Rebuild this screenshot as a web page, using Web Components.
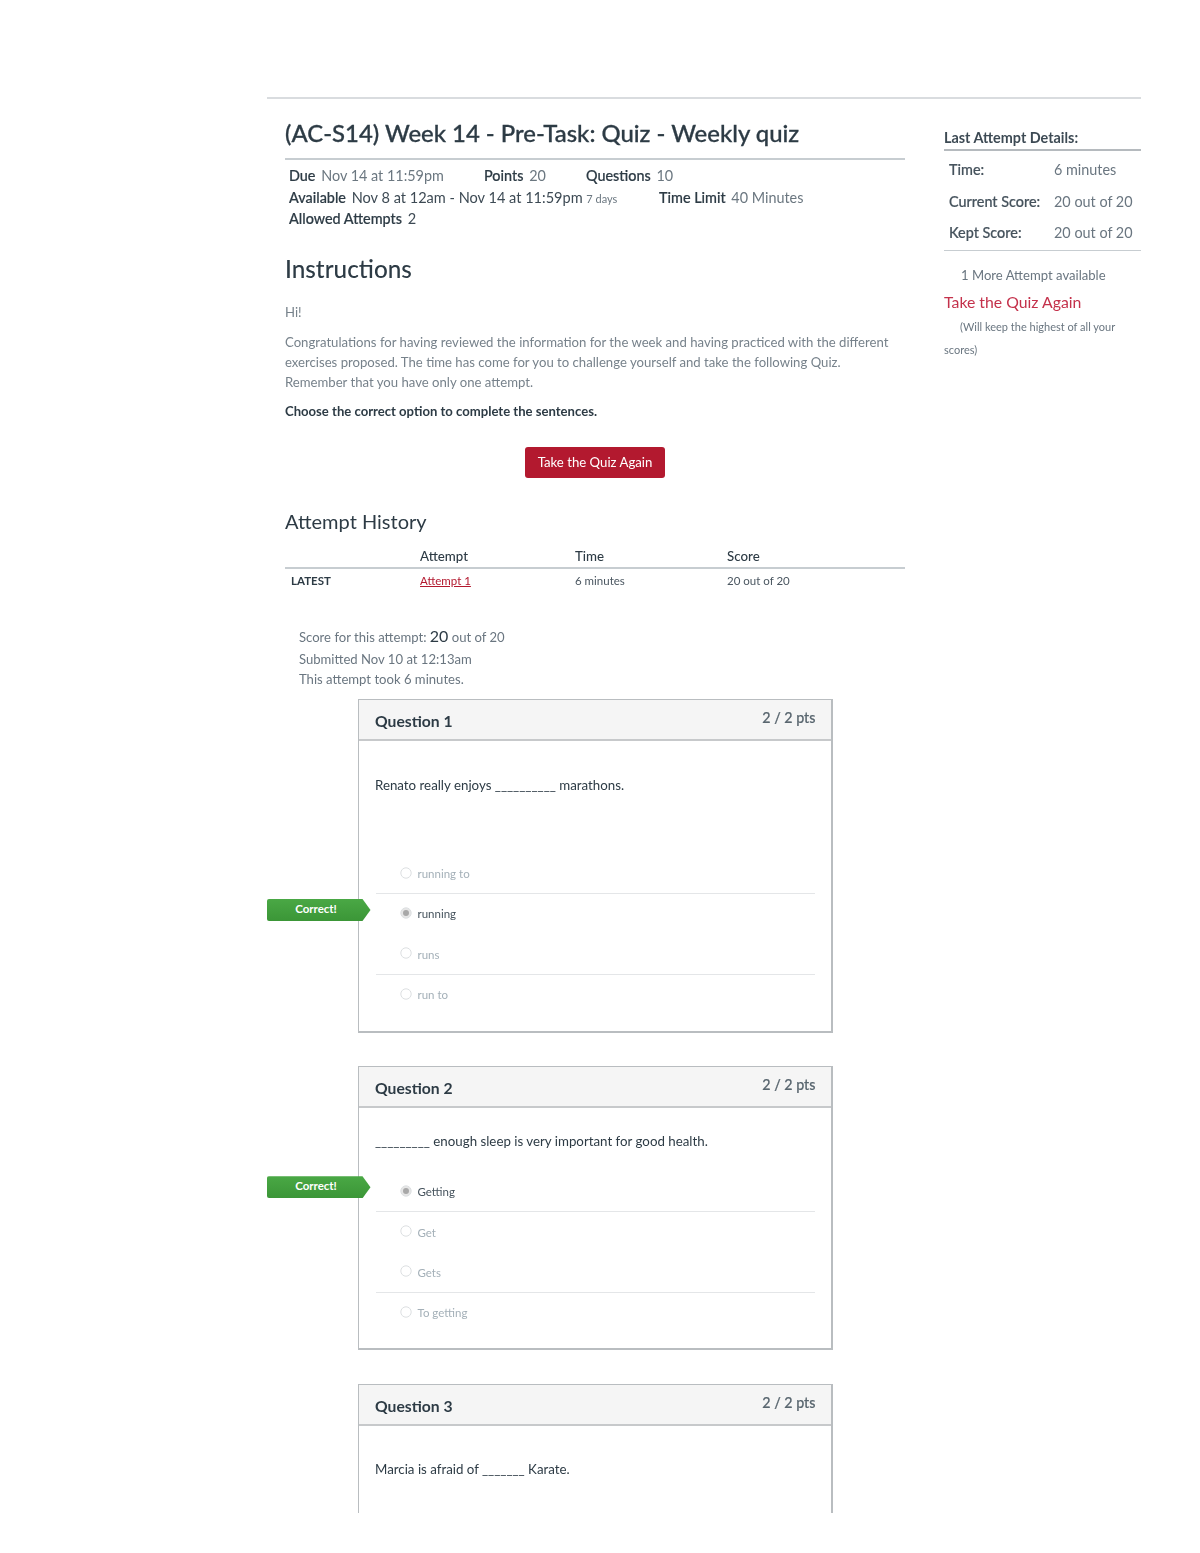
<!DOCTYPE html>
<html>
<head>
<meta charset="utf-8">
<title>Quiz</title>
<style>
  html, body { margin: 0; background: #fff; }
  body { font-family: Lato, "Open Sans", sans-serif; color: #2d3b45; }
</style>
</head>
<body>
<quiz-page>
  <quiz-summary slot="main"></quiz-summary>
  <attempt-history slot="main"></attempt-history>
  <attempt-result slot="main"></attempt-result>

  <quiz-question slot="main" number="1" top="35" gap="60" flag="199" style="margin-bottom:33px">
    Renato really enjoys __________ marathons.
    <quiz-answer slot="answers" line>running to</quiz-answer>
    <quiz-answer slot="answers" picked>running</quiz-answer>
    <quiz-answer slot="answers" line>runs</quiz-answer>
    <quiz-answer slot="answers">run to</quiz-answer>
  </quiz-question>

  <quiz-question slot="main" number="2" top="24" gap="22" bottom="15" flag="109" style="margin-bottom:34px">
    _________ enough sleep is very important for good health.
    <quiz-answer slot="answers" picked line>Getting</quiz-answer>
    <quiz-answer slot="answers">Get</quiz-answer>
    <quiz-answer slot="answers" line>Gets</quiz-answer>
    <quiz-answer slot="answers">To getting</quiz-answer>
  </quiz-question>

  <quiz-question slot="main" number="3" top="34" gap="60">
    Marcia is afraid of _______ Karate.
    <quiz-answer slot="answers" line>&nbsp;</quiz-answer>
  </quiz-question>

  <attempt-details slot="side"></attempt-details>
</quiz-page>

<script>
class QuizPage extends HTMLElement {
  connectedCallback() {
    this.attachShadow({ mode: 'open' });
    this.shadowRoot.innerHTML = `
      <style>
        :host { display: block; height: 1513px; overflow: hidden; padding-top: 97px; box-sizing: border-box; filter: blur(0.45px); }
        .frame { margin: 0 59px 0 267px; border-top: 2px solid #d9dcdf; display: grid; grid-template-columns: 620px 197px; column-gap: 39px; padding: 0 0 0 18px; }
      </style>
      <div class="frame">
        <div><slot name="main"></slot></div>
        <div><slot name="side"></slot></div>
      </div>
    `;
  }
}

class QuizSummary extends HTMLElement {
  connectedCallback() {
    this.attachShadow({ mode: 'open' });
    this.shadowRoot.innerHTML = `
      <style>
        :host { display: block; }
        h1 { margin: 0; padding: 19px 0 11px; font-size: 23.9px; line-height: 29px; font-weight: 500; color: #2d3b45; border-bottom: 2px solid #c7cdd1; -webkit-text-stroke: 0.3px #2d3b45; }
        .meta { padding: 5px 0 0 4px; font-size: 14.4px; line-height: 21px; color: #6b7780; }
        .meta b { font-weight: 500; color: #2d3b45; margin-right: 2px; -webkit-text-stroke: 0.2px #2d3b45; }
        .meta .row { display: flex; height: 21px; }
        .meta .row.first { height: 22px; }
        .meta small { font-size: 11px; }
        .dark { color: #3d4a54; font-size: 14.55px; }
        h2 { margin: 0; padding: 25px 0 0; font-size: 24.3px; line-height: 30px; font-weight: 500; color: #2d3b45; }
        p { margin: 0; font-size: 13.15px; line-height: 20px; color: #77828b; }
        .hi { padding-top: 18px; }
        .body { padding-top: 10px; }
        .strong { padding-top: 9px; color: #2d3b45; font-weight: 700; font-size: 13.1px; }
        .action { display: flex; justify-content: center; padding-top: 26px; }
        .btn { background: #b3192f; color: #fff; font-size: 13.2px; line-height: 31px; height: 31px; padding: 0 12.5px; border-radius: 3px; }
      </style>
      <h1>(AC-S14) Week 14 - Pre-Task: Quiz - Weekly quiz</h1>
      <div class="meta">
        <div class="row first">
          <span style="width:195px"><b>Due</b> Nov 14 at 11:59pm</span>
          <span style="width:102px"><b>Points</b> 20</span>
          <span><b>Questions</b> 10</span>
        </div>
        <div class="row">
          <span style="width:370px"><b>Available</b> <span class="dark">Nov 8 at 12am - Nov 14 at 11:59pm</span> <small>7 days</small></span>
          <span><b>Time Limit</b> 40 Minutes</span>
        </div>
        <div class="row"><span><b>Allowed Attempts</b> <span class="dark">2</span></span></div>
      </div>
      <h2>Instructions</h2>
      <p class="hi">Hi!</p>
      <p class="body">Congratulations for having reviewed the information for the week and having practiced with the different exercises proposed. The time has come for you to challenge yourself and take the following Quiz. Remember that you have only one attempt.</p>
      <p class="strong">Choose the correct option to complete the sentences.</p>
      <div class="action"><span class="btn">Take the Quiz Again</span></div>
    `;
  }
}

class AttemptHistory extends HTMLElement {
  connectedCallback() {
    this.attachShadow({ mode: 'open' });
    this.shadowRoot.innerHTML = `
      <style>
        :host { display: block; }
        h3 { margin: 0; padding: 31px 0 0; font-size: 20px; line-height: 25px; font-weight: 400; color: #2d3b45; }
        .grid { display: grid; grid-template-columns: 135px 155px 152px 1fr; font-size: 11.5px; margin-top: 12px; }
        .head { font-weight: 500; color: #2d3b45; font-size: 13.3px; line-height: 20px; padding-bottom: 1px; border-bottom: 2px solid #c7cdd1; }
        .cell { line-height: 23px; color: #4a5660; }
        .latest { font-weight: 700; padding-left: 6px; color: #2d3b45; }
        a { color: #b3192f; text-decoration: underline; }
      </style>
      <h3>Attempt History</h3>
      <div class="grid">
        <span class="head"></span><span class="head">Attempt</span><span class="head">Time</span><span class="head">Score</span>
        <span class="cell latest">LATEST</span>
        <span class="cell"><a>Attempt 1</a></span>
        <span class="cell">6 minutes</span>
        <span class="cell">20 out of 20</span>
      </div>
    `;
  }
}

class AttemptResult extends HTMLElement {
  connectedCallback() {
    this.attachShadow({ mode: 'open' });
    this.shadowRoot.innerHTML = `
      <style>
        :host { display: block; padding: 34px 0 10px 14px; font-size: 13.1px; line-height: 20px; color: #6a7680; }
        b { font-weight: 400; font-size: 16px; color: #2d3b45; }
        .score { margin-bottom: 2px; }
      </style>
      <div class="score">Score for this attempt: <b>20</b> out of 20</div>
      <div>Submitted Nov 10 at 12:13am</div>
      <div>This attempt took 6 minutes.</div>
    `;
  }
}

class QuizQuestion extends HTMLElement {
  connectedCallback() {
    const top = this.getAttribute('top');
    const gap = this.getAttribute('gap');
    const bottom = this.getAttribute('bottom') || 16;
    const flag = this.getAttribute('flag');
    this.attachShadow({ mode: 'open' });
    this.shadowRoot.innerHTML = `
      <style>
        :host { display: block; position: relative; width: 475px; margin: 0 auto; box-sizing: border-box; border: solid #b9bdc0; border-width: 1px 2px 2px 1px; }
        .head { display: flex; justify-content: space-between; background: #f5f5f5; border-bottom: 2px solid #c7c9cb; height: 41px; padding: 0 15px 0 16.5px; box-sizing: border-box; }
        .title { font-size: 15.7px; font-weight: 700; line-height: 42px; color: #2d3b45; }
        .pts { font-size: 14.3px; font-weight: 500; line-height: 36px; color: #59666f; -webkit-text-stroke: 0.2px #59666f; }
        .text { padding: ${top}px 16.5px 0; font-size: 13.3px; line-height: 18px; color: #2d3b45; }
        .answers { padding: ${gap}px 16px ${bottom}px 17px; }
        correct-flag { position: absolute; left: -92px; }
      </style>
      <div class="head"><span class="title">Question ${this.getAttribute('number')}</span><span class="pts">2 / 2 pts</span></div>
      <div class="text"><slot></slot></div>
      <div class="answers"><slot name="answers"></slot></div>
      ${flag === null ? '' : `<correct-flag style="top:${flag}px"></correct-flag>`}
    `;
  }
}

class QuizAnswer extends HTMLElement {
  connectedCallback() {
    const picked = this.hasAttribute('picked');
    const line = this.hasAttribute('line');
    this.attachShadow({ mode: 'open' });
    this.shadowRoot.innerHTML = `
      <style>
        :host { display: block; }
        .row { display: flex; align-items: center; height: 40.3px; box-sizing: border-box; padding-left: 24px; gap: 6px; font-size: 11.5px; color: ${picked ? '#46535d' : '#a4b0b8'}; border-bottom: ${line ? '1px solid #e4e6e8' : '1px solid transparent'}; }
        svg { flex: none; margin-top: -2px; }
      </style>
      <div class="row">
        <svg width="12" height="12" viewBox="0 0 12 12">
          <circle cx="6" cy="6" r="5.2" fill="${picked ? '#e6e6e6' : '#fff'}" stroke="#dcdfe1"/>
          ${picked ? '<circle cx="6" cy="6" r="3" fill="#a8a8a8"/>' : ''}
        </svg>
        <span><slot></slot></span>
      </div>
    `;
  }
}

class CorrectFlag extends HTMLElement {
  connectedCallback() {
    this.attachShadow({ mode: 'open' });
    this.shadowRoot.innerHTML = `
      <style>
        :host { display: block; width: 104px; height: 22px; }
        .tag { height: 22px; padding-right: 5px; background: linear-gradient(#4aa845, #3b9637); color: #fff; font-size: 11.5px; font-weight: 700; line-height: 20px; text-align: center; clip-path: polygon(0 0, 96px 0, 104px 50%, 96px 100%, 0 100%); border-radius: 2px 0 0 2px; }
      </style>
      <div class="tag">Correct!</div>
    `;
  }
}

class AttemptDetails extends HTMLElement {
  connectedCallback() {
    this.attachShadow({ mode: 'open' });
    this.shadowRoot.innerHTML = `
      <style>
        :host { display: block; padding-top: 29px; font-size: 13.1px; color: #6a7680; }
        h4 { margin: 0; font-size: 14.4px; line-height: 20px; font-weight: 700; color: #3d4a54; padding-bottom: 1px; border-bottom: 2px solid #b5babe; }
        .rows { border-bottom: 1px solid #c7cdd1; padding: 3px 0 1px 5px; display: grid; grid-template-columns: 105px 1fr; grid-auto-rows: 31.5px; align-items: center; font-size: 14.4px; }
        .rows b { color: #46535d; font-weight: 500; -webkit-text-stroke: 0.2px #46535d; }
        .more { padding: 14px 0 0 17px; line-height: 20px; }
        .again { color: #c4314b; font-size: 15.8px; line-height: 24px; padding-top: 5px; }
        .note { font-size: 11px; line-height: 23.5px; padding-top: 1px; text-indent: 16px; }
      </style>
      <h4>Last Attempt Details:</h4>
      <div class="rows">
        <b>Time:</b><span>6 minutes</span>
        <b>Current Score:</b><span>20 out of 20</span>
        <b>Kept Score:</b><span>20 out of 20</span>
      </div>
      <div class="more">1 More Attempt available</div>
      <div class="again">Take the Quiz Again</div>
      <div class="note">(Will keep the highest of all your scores)</div>
    `;
  }
}

customElements.define('quiz-page', QuizPage);
customElements.define('quiz-summary', QuizSummary);
customElements.define('attempt-history', AttemptHistory);
customElements.define('attempt-result', AttemptResult);
customElements.define('quiz-question', QuizQuestion);
customElements.define('quiz-answer', QuizAnswer);
customElements.define('correct-flag', CorrectFlag);
customElements.define('attempt-details', AttemptDetails);
</script>
</body>
</html>
